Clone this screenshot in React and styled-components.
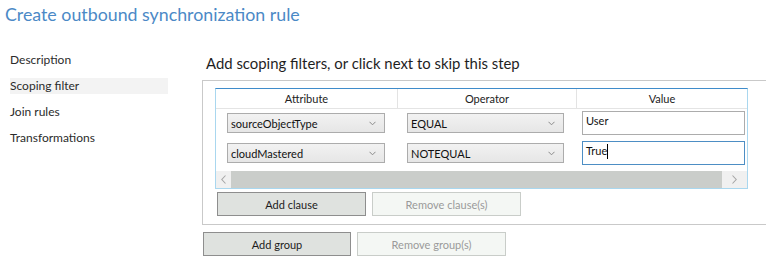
import React from "react";
import styled, { createGlobalStyle } from "styled-components";

const Global = createGlobalStyle`
  html, body { margin: 0; padding: 0; background: #fff; }
  body { font-family: "Segoe UI", Lato, "Noto Sans", sans-serif; overflow: hidden; }
  * { box-sizing: border-box; }
`;

const Page = styled.div`
  width: 766px;
  height: 274px;
  overflow: hidden;
  display: flex;
  flex-direction: column;
`;

const Title = styled.h1`
  margin: 0;
  height: 40px;
  padding: 3px 0 0 5px;
  font-weight: 400;
  font-size: 17.8px;
  line-height: 22px;
  color: #4b89c6;
  white-space: nowrap;
`;

const Content = styled.div`
  display: flex;
  flex: 1;
`;

const Sidebar = styled.nav`
  width: 202px;
  flex: none;
  padding: 12px 0 0 10px;
  display: flex;
  flex-direction: column;
  gap: 10px;
`;

const NavItem = styled.div`
  width: 158px;
  height: 16px;
  line-height: 16px;
  font-size: 12px;
  color: #2b2b2b;
  background: ${(p) => (p.$active ? "#f3f3f3" : "transparent")};
  white-space: nowrap;
`;

const Main = styled.div`
  flex: 1;
  display: flex;
  flex-direction: column;
  min-width: 0;
`;

const Heading = styled.h2`
  margin: 14px 0 0 4px;
  font-weight: 400;
  font-size: 14.9px;
  line-height: 18px;
  color: #1e1e1e;
  white-space: nowrap;
`;

const GroupBox = styled.div`
  margin-top: 8px;
  width: 600px;
  border: 1px solid #c9c9c9;
  border-right: none;
  padding: 7px 0 8px 12px;
`;

const Grid = styled.div`
  width: 533px;
  height: 101px;
  border: 1px solid #a9d7ef;
  border-top-color: #3f8ccb;
  display: flex;
  flex-direction: column;
  background: #fff;
`;

const Cols = "182px 179px 170px";

const HeaderRow = styled.div`
  display: grid;
  grid-template-columns: ${Cols};
  height: 20px;
  border-bottom: 1px solid #e4e4e4;
`;

const HeaderCell = styled.div`
  font-size: 11px;
  line-height: 19px;
  color: #222;
  text-align: center;
  border-right: ${(p) => (p.$last ? "none" : "1px solid #e3e3e3")};
`;

const Row = styled.div`
  display: grid;
  grid-template-columns: ${Cols};
  height: 30px;
  align-items: start;
`;

const Cell = styled.div`
  padding-left: ${(p) => p.$pad}px;
  padding-top: ${(p) => p.$top}px;
`;

const Combo = styled.div`
  width: ${(p) => p.$w}px;
  height: 20px;
  border: 1px solid #acacac;
  background: linear-gradient(#f2f2f2, #e6e6e6);
  display: flex;
  align-items: center;
  justify-content: space-between;
  padding: 0 8px 0 3px;
  font-size: 11px;
  color: #111;
`;

const TextBox = styled.div`
  width: 163px;
  height: 24px;
  border: 1px solid ${(p) => (p.$focus ? "#4d8ec4" : "#acacac")};
  background: #fff;
  padding: 1px 3px;
  font-size: 11px;
  line-height: 16px;
  color: #111;
  display: flex;
  align-items: flex-start;
`;

const Caret = styled.span`
  display: inline-block;
  width: 1px;
  height: 15px;
  background: #000;
  margin-top: 1px;
`;

const Spacer = styled.div`
  flex: 1;
`;

const HScroll = styled.div`
  height: 17px;
  display: flex;
`;

const ScrollBtn = styled.div`
  width: ${(p) => p.$w}px;
  background: #f0f0f0;
  display: flex;
  align-items: center;
  justify-content: center;
`;

const Thumb = styled.div`
  flex: 1;
  background: #cacdca;
`;

const ButtonRow = styled.div`
  display: flex;
  gap: 6px;
  margin: ${(p) => p.$m};
`;

const Button = styled.div`
  width: ${(p) => p.$w}px;
  height: 24px;
  display: flex;
  align-items: center;
  justify-content: center;
  font-size: 11px;
  color: ${(p) => (p.$disabled ? "#9a9a9a" : "#1c1c1c")};
  background: ${(p) => (p.$disabled ? "#f4f7f4" : "#dfe2df")};
  border: 1px solid ${(p) => (p.$disabled ? "#c9cdc9" : "#8e8e8e")};
`;

const Chevron = () => (
  <svg width="7" height="5" viewBox="0 0 7 5">
    <path d="M0.5 0.8 L3.5 3.8 L6.5 0.8" fill="none" stroke="#8a8a8a" strokeWidth="1" />
  </svg>
);

const Arrow = ({ dir }) => (
  <svg width="5" height="9" viewBox="0 0 5 9">
    <path
      d={dir === "left" ? "M4.5 0.5 L0.8 4.5 L4.5 8.5" : "M0.5 0.5 L4.2 4.5 L0.5 8.5"}
      fill="none"
      stroke="#a6a6a6"
      strokeWidth="1.1"
    />
  </svg>
);

const rows = [
  { attr: "sourceObjectType", op: "EQUAL", value: "User", focus: false },
  { attr: "cloudMastered", op: "NOTEQUAL", value: "True", focus: true },
];

export default function App() {
  return (
    <>
      <Global />
      <Page>
        <Title>Create outbound synchronization rule</Title>
        <Content>
          <Sidebar>
            <NavItem>Description</NavItem>
            <NavItem $active>Scoping filter</NavItem>
            <NavItem>Join rules</NavItem>
            <NavItem>Transformations</NavItem>
          </Sidebar>
          <Main>
            <Heading>Add scoping filters, or click next to skip this step</Heading>
            <GroupBox>
              <Grid>
                <HeaderRow>
                  <HeaderCell>Attribute</HeaderCell>
                  <HeaderCell>Operator</HeaderCell>
                  <HeaderCell $last>Value</HeaderCell>
                </HeaderRow>
                {rows.map((r) => (
                  <Row key={r.attr}>
                    <Cell $pad={11} $top={4}>
                      <Combo $w={158}>
                        <span>{r.attr}</span>
                        <Chevron />
                      </Combo>
                    </Cell>
                    <Cell $pad={9} $top={4}>
                      <Combo $w={157}>
                        <span>{r.op}</span>
                        <Chevron />
                      </Combo>
                    </Cell>
                    <Cell $pad={5} $top={2}>
                      <TextBox $focus={r.focus}>
                        <span>{r.value}</span>
                        {r.focus && <Caret />}
                      </TextBox>
                    </Cell>
                  </Row>
                ))}
                <Spacer />
                <HScroll>
                  <ScrollBtn $w={15}>
                    <Arrow dir="left" />
                  </ScrollBtn>
                  <Thumb />
                  <ScrollBtn $w={25}>
                    <Arrow dir="right" />
                  </ScrollBtn>
                </HScroll>
              </Grid>
              <ButtonRow $m="3px 0 0 2px">
                <Button $w={149}>Add clause</Button>
                <Button $w={149} $disabled>
                  Remove clause(s)
                </Button>
              </ButtonRow>
            </GroupBox>
            <ButtonRow $m="7px 0 0 1px">
              <Button $w={148}>Add group</Button>
              <Button $w={149} $disabled>
                Remove group(s)
              </Button>
            </ButtonRow>
          </Main>
        </Content>
      </Page>
    </>
  );
}
